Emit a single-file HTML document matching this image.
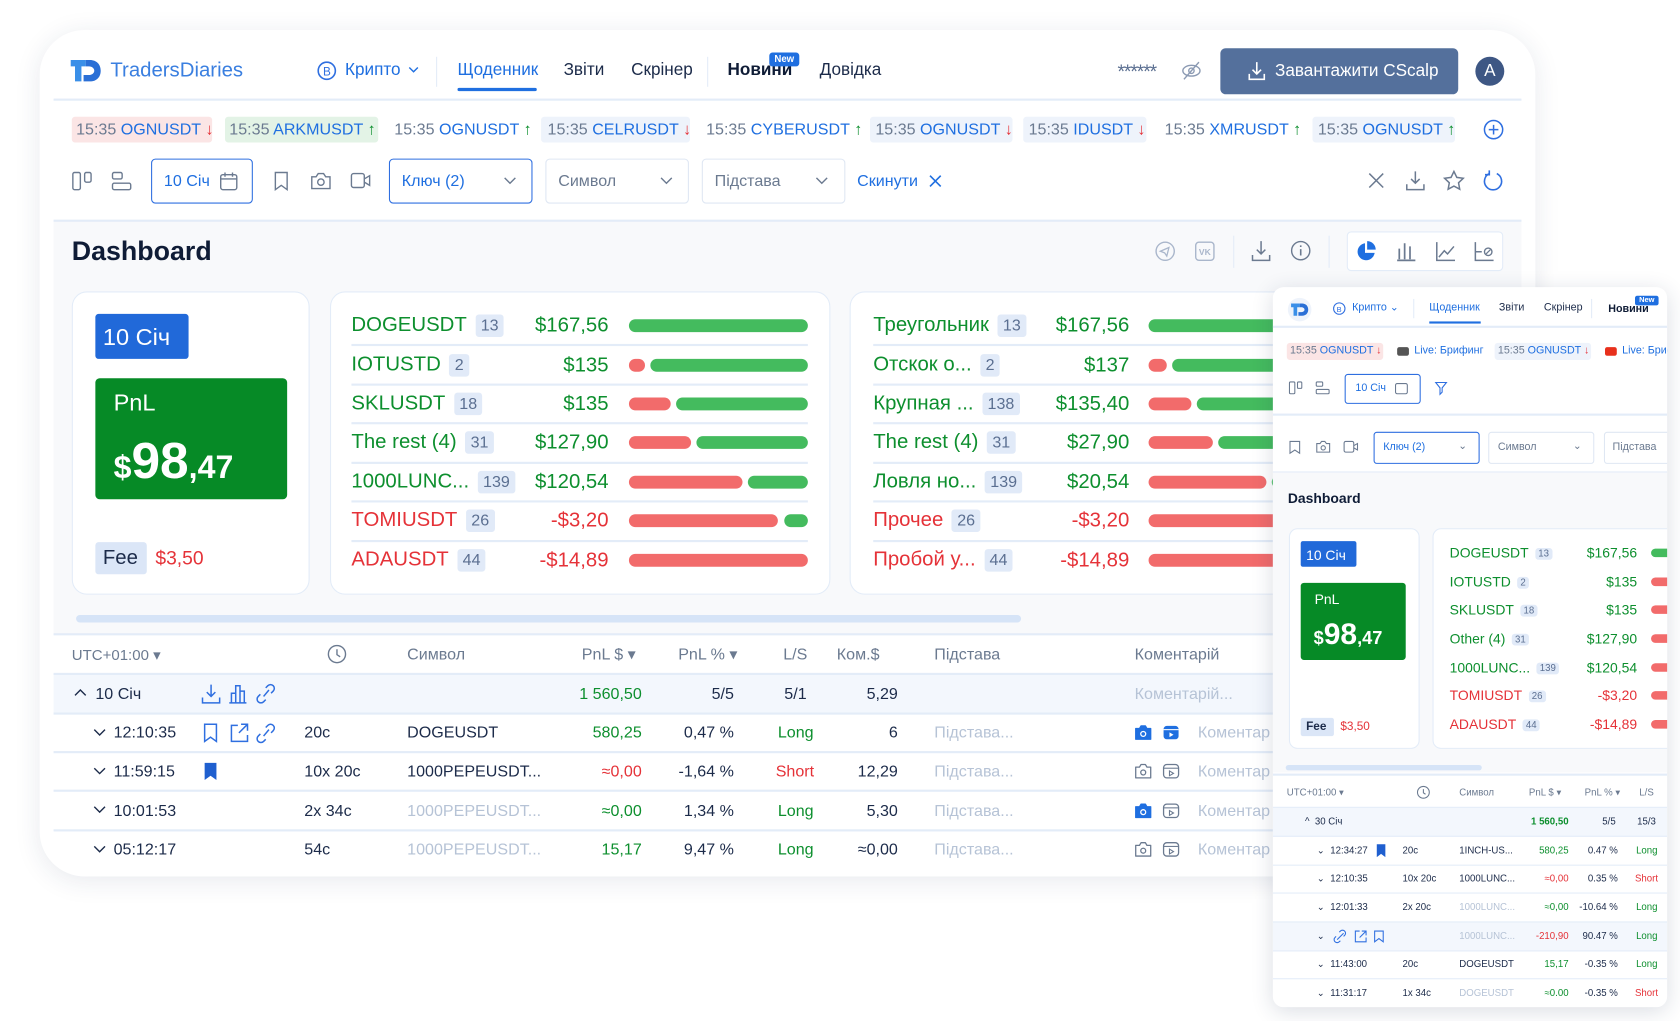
<!DOCTYPE html>
<html><head><meta charset="utf-8">
<style>
*{box-sizing:border-box;margin:0;padding:0}
html,body{width:1680px;height:1021px;overflow:hidden;background:#fff;font-family:"Liberation Sans","Noto Sans CJK SC",sans-serif}
#w{position:absolute;left:0;top:0;width:1568px;height:953px;transform:scale(1.071429);transform-origin:0 0}
.a{position:absolute}
.t{position:absolute;line-height:1;white-space:nowrap;transform:translateY(-50%)}
.r{text-align:right}
.card{position:absolute;background:#fff;border:1.5px solid #e3ecf8;border-radius:14px}
.bd{display:inline-block;background:#e1eaf8;color:#5b6f91;border-radius:3px;padding:3px 5px;font-size:15px;margin-left:8px;vertical-align:middle}
.bar{position:absolute;height:12px;border-radius:6px}
.g{background:#44bb5e}.rd{background:#f26b6b}
.gc{color:#0d8f2e}.rc{color:#e53238}
.ln{position:absolute;height:1.5px;background:#e3ecf8}
.pill{position:absolute;height:24px;border-radius:3px;transform:translateY(-50%)}
svg{position:absolute;overflow:visible}
</style></head><body><div id="w">

<!-- main card -->
<div class="a" style="left:37px;top:28px;width:1396px;height:790px;border-radius:42px;background:#fff;box-shadow:0 4px 24px rgba(30,50,90,.10);overflow:hidden">
</div>
<div class="a" style="left:50px;top:206px;width:1370px;height:386px;background:#f8f9fb"></div>
<div class="ln" style="left:50px;top:92px;width:1370px"></div>
<div class="ln" style="left:50px;top:205px;width:1370px"></div>

<!-- header -->
<svg style="left:66px;top:56px" width="28" height="20" viewBox="0 0 28 20"><path d="M0 0h14v6h-4v14h-6V6H0z" fill="#3a8fe8"/><path d="M14 0h4c6 0 10 4 10 10s-4 10-10 10h-6v-6h5c3 0 5-2 5-4s-2-4-5-4h-3z" fill="#2a6fd6"/></svg>
<div class="t" style="left:103px;top:66px;font-size:19px;color:#3a7fe0">TradersDiaries</div>
<svg style="left:296px;top:57px" width="18" height="18"><circle cx="9" cy="9" r="8" fill="none" stroke="#2f6fe0" stroke-width="1.5"/><text x="5.5" y="13.5" font-size="11" fill="#2f6fe0" font-family="Liberation Sans">B</text></svg>
<div class="t" style="left:322px;top:66px;font-size:16px;color:#1f6fe0">Крипто</div>
<svg style="left:381px;top:62px" width="10" height="7"><path d="M1 1l4 4 4-4" fill="none" stroke="#1f6fe0" stroke-width="1.3"/></svg>
<div class="a" style="left:407px;top:53px;width:1px;height:28px;background:#e3ecf8"></div>
<div class="t" style="left:427px;top:66px;font-size:16px;color:#1f6fe0">Щоденник</div>
<div class="a" style="left:427px;top:82px;width:74px;height:3px;background:#1f6fe0;border-radius:2px"></div>
<div class="t" style="left:526px;top:66px;font-size:16px;color:#1c2b4a">Звіти</div>
<div class="t" style="left:589px;top:66px;font-size:16px;color:#1c2b4a">Скрінер</div>
<div class="a" style="left:660px;top:53px;width:1px;height:28px;background:#e3ecf8"></div>
<div class="t" style="left:679px;top:66px;font-size:16px;color:#0f1c36;font-weight:bold">Новини</div>
<div class="a" style="left:718px;top:49px;width:28px;height:13px;background:#1f6fe0;border-radius:3px;color:#fff;font-size:9px;font-weight:bold;text-align:center;line-height:13px">New</div>
<div class="t" style="left:765px;top:66px;font-size:16px;color:#1c2b4a">Довідка</div>
<div class="t" style="left:1043px;top:67px;font-size:18px;color:#5b6f91;letter-spacing:-1px">******</div>
<svg style="left:1102px;top:57px" width="20" height="18"><ellipse cx="10" cy="9" rx="8" ry="5" fill="none" stroke="#8b9ab3" stroke-width="1.3"/><circle cx="10" cy="9" r="2.5" fill="none" stroke="#8b9ab3" stroke-width="1.3"/><path d="M3 17L17 1" stroke="#8b9ab3" stroke-width="1.3"/></svg>
<div class="a" style="left:1139px;top:45px;width:222px;height:43px;background:#54709c;border-radius:5px"></div>
<svg style="left:1164px;top:57px" width="18" height="18"><path d="M9 1v11M5 8l4 4 4-4M2 12v5h14v-5" fill="none" stroke="#fff" stroke-width="1.5"/></svg>
<div class="t" style="left:1190px;top:67px;font-size:16px;color:#fff">Завантажити CScalp</div>
<div class="a" style="left:1377px;top:53px;width:27px;height:27px;border-radius:50%;background:#3e5784;color:#fff;font-size:16px;text-align:center;line-height:27px">A</div>

<!-- ticker -->
<div class="pill" style="left:67px;top:121px;width:131px;background:#fbe5e5"></div>
<div class="pill" style="left:210px;top:121px;width:143px;background:#e3f3e6"></div>
<div class="pill" style="left:505px;top:121px;width:139px;background:#eef3fb"></div>
<div class="pill" style="left:812px;top:121px;width:133px;background:#eef3fb"></div>
<div class="pill" style="left:955px;top:121px;width:115px;background:#eef3fb"></div>
<div class="pill" style="left:1225px;top:121px;width:133px;background:#eef3fb"></div>
<div class="t" style="left:71px;top:121px;font-size:15px;color:#6b7a90">15:35 <span style="color:#1f6fe0">OGNUSDT</span> <span class="rc">↓</span></div>
<div class="t" style="left:214px;top:121px;font-size:15px;color:#6b7a90">15:35 <span style="color:#1f6fe0">ARKMUSDT</span> <span class="gc">↑</span></div>
<div class="t" style="left:368px;top:121px;font-size:15px;color:#6b7a90">15:35 <span style="color:#1f6fe0">OGNUSDT</span> <span class="gc">↑</span></div>
<div class="t" style="left:511px;top:121px;font-size:15px;color:#6b7a90">15:35 <span style="color:#1f6fe0">CELRUSDT</span> <span class="rc">↓</span></div>
<div class="t" style="left:659px;top:121px;font-size:15px;color:#6b7a90">15:35 <span style="color:#1f6fe0">CYBERUSDT</span> <span class="gc">↑</span></div>
<div class="t" style="left:817px;top:121px;font-size:15px;color:#6b7a90">15:35 <span style="color:#1f6fe0">OGNUSDT</span> <span class="rc">↓</span></div>
<div class="t" style="left:960px;top:121px;font-size:15px;color:#6b7a90">15:35 <span style="color:#1f6fe0">IDUSDT</span> <span class="rc">↓</span></div>
<div class="t" style="left:1087px;top:121px;font-size:15px;color:#6b7a90">15:35 <span style="color:#1f6fe0">XMRUSDT</span> <span class="gc">↑</span></div>
<div class="t" style="left:1230px;top:121px;font-size:15px;color:#6b7a90">15:35 <span style="color:#1f6fe0">OGNUSDT</span> <span class="gc">↑</span></div>
<svg style="left:1384px;top:111px" width="20" height="20"><circle cx="10" cy="10" r="8.5" fill="none" stroke="#2f6fe0" stroke-width="1.4"/><path d="M10 5.5v9M5.5 10h9" stroke="#2f6fe0" stroke-width="1.4"/></svg>

<!-- filter row -->
<svg style="left:67px;top:160px" width="20" height="18"><rect x="1" y="1" width="7" height="16" rx="1.5" fill="none" stroke="#6b7a90" stroke-width="1.3"/><rect x="12" y="1" width="6" height="9" rx="1.5" fill="none" stroke="#6b7a90" stroke-width="1.3"/></svg>
<svg style="left:104px;top:160px" width="20" height="18"><rect x="1" y="1" width="9" height="6" rx="1.5" fill="none" stroke="#6b7a90" stroke-width="1.3"/><rect x="1" y="11" width="17" height="6" rx="1.5" fill="none" stroke="#6b7a90" stroke-width="1.3"/></svg>
<div class="a" style="left:141px;top:148px;width:95px;height:42px;border:1.5px solid #2f6fe0;border-radius:4px"></div>
<div class="t" style="left:153px;top:169px;font-size:15px;color:#1f6fe0">10 Січ</div>
<svg style="left:205px;top:160px" width="17" height="18"><rect x="1" y="3" width="15" height="14" rx="2" fill="none" stroke="#6b7a90" stroke-width="1.3"/><path d="M1 7h15M5 1v4M12 1v4" stroke="#6b7a90" stroke-width="1.3"/></svg>
<svg style="left:255px;top:160px" width="15" height="18"><path d="M2 1h11v16l-5.5-4L2 17z" fill="none" stroke="#6b7a90" stroke-width="1.3"/></svg>
<svg style="left:290px;top:160px" width="19" height="17"><path d="M1 5h4l2-3h5l2 3h4v11H1z" fill="none" stroke="#6b7a90" stroke-width="1.3"/><circle cx="9.5" cy="10" r="3" fill="none" stroke="#6b7a90" stroke-width="1.3"/></svg>
<svg style="left:327px;top:160px" width="19" height="17"><rect x="1" y="2" width="12" height="13" rx="2" fill="none" stroke="#6b7a90" stroke-width="1.3"/><path d="M13 7l5-3v9l-5-3" fill="none" stroke="#6b7a90" stroke-width="1.3"/></svg>
<div class="a" style="left:363px;top:148px;width:134px;height:42px;border:1.5px solid #2f6fe0;border-radius:4px"></div>
<div class="t" style="left:375px;top:169px;font-size:15px;color:#1f6fe0">Ключ (2)</div>
<svg style="left:470px;top:165px" width="12" height="8"><path d="M1 1l5 5 5-5" fill="none" stroke="#6b7a90" stroke-width="1.3"/></svg>
<div class="a" style="left:509px;top:148px;width:134px;height:42px;border:1.5px solid #dfe7f3;border-radius:4px"></div>
<div class="t" style="left:521px;top:169px;font-size:15px;color:#6b7a90">Символ</div>
<svg style="left:616px;top:165px" width="12" height="8"><path d="M1 1l5 5 5-5" fill="none" stroke="#6b7a90" stroke-width="1.3"/></svg>
<div class="a" style="left:655px;top:148px;width:134px;height:42px;border:1.5px solid #dfe7f3;border-radius:4px"></div>
<div class="t" style="left:667px;top:169px;font-size:15px;color:#6b7a90">Підстава</div>
<svg style="left:761px;top:165px" width="12" height="8"><path d="M1 1l5 5 5-5" fill="none" stroke="#6b7a90" stroke-width="1.3"/></svg>
<div class="t" style="left:800px;top:169px;font-size:15px;color:#1f6fe0">Скинути</div>
<svg style="left:867px;top:163px" width="12" height="12"><path d="M1 1l10 10M11 1L1 11" stroke="#1f6fe0" stroke-width="1.5"/></svg>
<svg style="left:1277px;top:161px" width="15" height="15"><path d="M1 1l13 13M14 1L1 14" stroke="#6b7a90" stroke-width="1.4"/></svg>
<svg style="left:1312px;top:159px" width="18" height="19"><path d="M9 1v11M5 8l4 4 4-4M1 13v5h16v-5" fill="none" stroke="#6b7a90" stroke-width="1.4"/></svg>
<svg style="left:1347px;top:159px" width="20" height="19"><path d="M10 1l2.7 5.6 6 .8-4.4 4.2 1.1 6L10 14.7 4.6 17.6l1.1-6L1.3 7.4l6-.8z" fill="none" stroke="#6b7a90" stroke-width="1.4"/></svg>
<svg style="left:1384px;top:159px" width="19" height="20"><path d="M13 3a8 8 0 1 1-7 0" fill="none" stroke="#2f6fe0" stroke-width="1.5"/><path d="M6 0v4H2" fill="none" stroke="#2f6fe0" stroke-width="1.5"/></svg>

<!-- dashboard header -->
<div class="t" style="left:67px;top:235px;font-size:25px;color:#0f1c36;font-weight:bold">Dashboard</div>
<svg style="left:1078px;top:225px" width="19" height="19"><circle cx="9.5" cy="9.5" r="8.5" fill="none" stroke="#a9b6cb" stroke-width="1.3"/><path d="M5 9.5l8-3.5-2 8-2-3z" fill="none" stroke="#a9b6cb" stroke-width="1.2"/></svg>
<svg style="left:1115px;top:225px" width="19" height="19"><rect x="1" y="1" width="17" height="17" rx="3" fill="none" stroke="#a9b6cb" stroke-width="1.3"/><text x="4" y="13" font-size="8" fill="#a9b6cb" font-family="Liberation Sans" font-weight="bold">VK</text></svg>
<div class="a" style="left:1151px;top:220px;width:1px;height:30px;background:#e3ecf8"></div>
<svg style="left:1168px;top:224px" width="18" height="20"><path d="M9 1v12M5 9l4 4 4-4M1 14v5h16v-5" fill="none" stroke="#6b7a90" stroke-width="1.4"/></svg>
<svg style="left:1204px;top:224px" width="20" height="20"><circle cx="10" cy="10" r="8.5" fill="none" stroke="#6b7a90" stroke-width="1.3"/><path d="M10 8.5v6M10 5v1.5" stroke="#6b7a90" stroke-width="1.5"/></svg>
<div class="a" style="left:1240px;top:220px;width:1px;height:30px;background:#e3ecf8"></div>
<div class="a" style="left:1257px;top:216px;width:146px;height:37px;border:1.5px solid #e3ecf8;border-radius:4px;background:#fff"></div>
<svg style="left:1266px;top:225px" width="19" height="19"><path d="M8 2a8 8 0 1 0 9 9H8z" fill="#1f6fe0"/><path d="M10 0a8 8 0 0 1 8 8h-8z" fill="#1f6fe0"/></svg>
<svg style="left:1303px;top:225px" width="19" height="19"><path d="M3 7v10M8 2v15M13 5v12M1 18h17" stroke="#6b7a90" stroke-width="1.6"/></svg>
<svg style="left:1340px;top:225px" width="19" height="19"><path d="M1 1v17h17M3 15l5-6 3 3 6-7" fill="none" stroke="#6b7a90" stroke-width="1.4"/></svg>
<svg style="left:1376px;top:225px" width="19" height="19"><path d="M1 1v17h17M1 10h6" fill="none" stroke="#6b7a90" stroke-width="1.4"/><circle cx="13" cy="10" r="3.5" fill="none" stroke="#6b7a90" stroke-width="1.3"/><path d="M11 12l4-4" stroke="#6b7a90" stroke-width="1.2"/></svg>

<!-- card1 -->
<div class="card" style="left:67px;top:272px;width:222px;height:283px"></div>
<div class="a" style="left:89px;top:293px;width:87px;height:42px;background:#2169d9;border-radius:3px"></div>
<div class="t" style="left:96px;top:315px;font-size:22px;color:#fff">10 Січ</div>
<div class="a" style="left:89px;top:353px;width:179px;height:113px;background:#068a26;border-radius:4px"></div>
<div class="t" style="left:106px;top:376px;font-size:22px;color:#fff">PnL</div>
<div class="t" style="left:106px;top:431px;color:#fff;font-weight:bold"><span style="font-size:30px">$</span><span style="font-size:48px">98</span><span style="font-size:30px">,47</span></div>
<div class="a" style="left:89px;top:506px;width:48px;height:30px;background:#dbe6f7;border-radius:3px"></div>
<div class="t" style="left:96px;top:521px;font-size:19px;color:#1c2b4a">Fee</div>
<div class="t" style="left:145px;top:521px;font-size:18px;" ><span class="rc">$3,50</span></div>

<!-- card2 -->
<div class="card" style="left:308px;top:272px;width:467px;height:283px"></div>
<div class="ln" style="left:328px;top:321px;width:426px"></div>
<div class="ln" style="left:328px;top:358px;width:426px"></div>
<div class="ln" style="left:328px;top:394px;width:426px"></div>
<div class="ln" style="left:328px;top:431px;width:426px"></div>
<div class="ln" style="left:328px;top:467px;width:426px"></div>
<div class="ln" style="left:328px;top:504px;width:426px"></div>
<div class="t gc" style="left:328px;top:304px;font-size:19px">DOGEUSDT<span class="bd">13</span></div>
<div class="t gc" style="left:328px;top:341px;font-size:19px">IOTUSTD<span class="bd">2</span></div>
<div class="t gc" style="left:328px;top:377px;font-size:19px">SKLUSDT<span class="bd">18</span></div>
<div class="t gc" style="left:328px;top:413px;font-size:19px">The rest (4)<span class="bd">31</span></div>
<div class="t gc" style="left:328px;top:450px;font-size:19px">1000LUNC...<span class="bd">139</span></div>
<div class="t rc" style="left:328px;top:486px;font-size:19px">TOMIUSDT<span class="bd">26</span></div>
<div class="t rc" style="left:328px;top:523px;font-size:19px">ADAUSDT<span class="bd">44</span></div>
<div class="t gc r" style="left:448px;width:120px;top:304px;font-size:19px">$167,56</div>
<div class="t gc r" style="left:448px;width:120px;top:341px;font-size:19px">$135</div>
<div class="t gc r" style="left:448px;width:120px;top:377px;font-size:19px">$135</div>
<div class="t gc r" style="left:448px;width:120px;top:413px;font-size:19px">$127,90</div>
<div class="t gc r" style="left:448px;width:120px;top:450px;font-size:19px">$120,54</div>
<div class="t rc r" style="left:448px;width:120px;top:486px;font-size:19px">-$3,20</div>
<div class="t rc r" style="left:448px;width:120px;top:523px;font-size:19px">-$14,89</div>
<div class="bar g" style="left:587px;top:298px;width:167px"></div>
<div class="bar rd" style="left:587px;top:335px;width:15px"></div><div class="bar g" style="left:607px;top:335px;width:147px"></div>
<div class="bar rd" style="left:587px;top:371px;width:39px"></div><div class="bar g" style="left:631px;top:371px;width:123px"></div>
<div class="bar rd" style="left:587px;top:407px;width:58px"></div><div class="bar g" style="left:650px;top:407px;width:104px"></div>
<div class="bar rd" style="left:587px;top:444px;width:106px"></div><div class="bar g" style="left:698px;top:444px;width:56px"></div>
<div class="bar rd" style="left:587px;top:480px;width:139px"></div><div class="bar g" style="left:732px;top:480px;width:22px"></div>
<div class="bar rd" style="left:587px;top:517px;width:167px"></div>

<!-- card3 -->
<div class="card" style="left:793px;top:272px;width:467px;height:283px"></div>
<div class="ln" style="left:815px;top:321px;width:426px"></div>
<div class="ln" style="left:815px;top:358px;width:426px"></div>
<div class="ln" style="left:815px;top:394px;width:426px"></div>
<div class="ln" style="left:815px;top:431px;width:426px"></div>
<div class="ln" style="left:815px;top:467px;width:426px"></div>
<div class="ln" style="left:815px;top:504px;width:426px"></div>
<div class="t gc" style="left:815px;top:304px;font-size:19px">Треугольник<span class="bd">13</span></div>
<div class="t gc" style="left:815px;top:341px;font-size:19px">Отскок о...<span class="bd">2</span></div>
<div class="t gc" style="left:815px;top:377px;font-size:19px">Крупная ...<span class="bd">138</span></div>
<div class="t gc" style="left:815px;top:413px;font-size:19px">The rest (4)<span class="bd">31</span></div>
<div class="t gc" style="left:815px;top:450px;font-size:19px">Ловля но...<span class="bd">139</span></div>
<div class="t rc" style="left:815px;top:486px;font-size:19px">Прочее<span class="bd">26</span></div>
<div class="t rc" style="left:815px;top:523px;font-size:19px">Пробой у...<span class="bd">44</span></div>
<div class="t gc r" style="left:934px;width:120px;top:304px;font-size:19px">$167,56</div>
<div class="t gc r" style="left:934px;width:120px;top:341px;font-size:19px">$137</div>
<div class="t gc r" style="left:934px;width:120px;top:377px;font-size:19px">$135,40</div>
<div class="t gc r" style="left:934px;width:120px;top:413px;font-size:19px">$27,90</div>
<div class="t gc r" style="left:934px;width:120px;top:450px;font-size:19px">$20,54</div>
<div class="t rc r" style="left:934px;width:120px;top:486px;font-size:19px">-$3,20</div>
<div class="t rc r" style="left:934px;width:120px;top:523px;font-size:19px">-$14,89</div>
<div class="bar g" style="left:1072px;top:298px;width:170px"></div>
<div class="bar rd" style="left:1072px;top:335px;width:17px"></div><div class="bar g" style="left:1094px;top:335px;width:148px"></div>
<div class="bar rd" style="left:1072px;top:371px;width:40px"></div><div class="bar g" style="left:1117px;top:371px;width:125px"></div>
<div class="bar rd" style="left:1072px;top:407px;width:60px"></div><div class="bar g" style="left:1137px;top:407px;width:105px"></div>
<div class="bar rd" style="left:1072px;top:444px;width:110px"></div><div class="bar g" style="left:1187px;top:444px;width:55px"></div>
<div class="bar rd" style="left:1072px;top:480px;width:170px"></div>
<div class="bar rd" style="left:1072px;top:517px;width:170px"></div>

<!-- scrollbar -->
<div class="a" style="left:71px;top:574px;width:882px;height:7px;background:#d6e4f7;border-radius:4px"></div>

<!-- table -->
<div class="a" style="left:50px;top:592px;width:1370px;height:226px;background:#fff;border-radius:0 0 30px 30px"></div>
<div class="ln" style="left:50px;top:591px;width:1370px"></div>
<div class="a" style="left:50px;top:629px;width:1370px;height:36px;background:#f3f7fd"></div>
<div class="ln" style="left:50px;top:628px;width:1370px"></div>
<div class="ln" style="left:50px;top:665px;width:1370px"></div>
<div class="ln" style="left:50px;top:701px;width:1370px"></div>
<div class="ln" style="left:50px;top:737px;width:1370px"></div>
<div class="ln" style="left:50px;top:774px;width:1370px"></div>

<div class="t" style="left:67px;top:611px;font-size:14px;color:#6b7a90">UTC+01:00 ▾</div>
<svg style="left:305px;top:601px" width="19" height="19"><circle cx="9.5" cy="9.5" r="8" fill="none" stroke="#6b7a90" stroke-width="1.3"/><path d="M9.5 5v5l3 2" fill="none" stroke="#6b7a90" stroke-width="1.3"/></svg>
<div class="t" style="left:380px;top:611px;font-size:15px;color:#6b7a90">Символ</div>
<div class="t" style="left:543px;top:611px;font-size:15px;color:#6b7a90">PnL $ ▾</div>
<div class="t" style="left:633px;top:611px;font-size:15px;color:#6b7a90">PnL % ▾</div>
<div class="t" style="left:731px;top:611px;font-size:15px;color:#6b7a90">L/S</div>
<div class="t" style="left:781px;top:611px;font-size:15px;color:#6b7a90">Ком.$</div>
<div class="t" style="left:872px;top:611px;font-size:15px;color:#6b7a90">Підстава</div>
<div class="t" style="left:1059px;top:611px;font-size:15px;color:#6b7a90">Коментарій</div>

<!-- group row -->
<svg style="left:69px;top:642px" width="12" height="8"><path d="M1 7l5-5 5 5" fill="none" stroke="#1c2b4a" stroke-width="1.3"/></svg>
<div class="t" style="left:89px;top:648px;font-size:15px;color:#1c2b4a">10 Січ</div>
<svg style="left:188px;top:638px" width="18" height="19"><path d="M9 1v11M5 8l4 4 4-4M1 13v5h16v-5" fill="none" stroke="#2f6fe0" stroke-width="1.4"/></svg>
<svg style="left:213px;top:638px" width="18" height="19"><path d="M1 18h16M3 18V9h4v9M7 18V2h4v16M11 18V7h4v11" fill="none" stroke="#2f6fe0" stroke-width="1.4"/></svg>
<svg style="left:239px;top:638px" width="18" height="19"><path d="M7 12l5-6M9 4l2-2a3.5 3.5 0 0 1 5 5l-2 2M9 15l-2 2a3.5 3.5 0 0 1-5-5l2-2" fill="none" stroke="#2f6fe0" stroke-width="1.4"/></svg>
<div class="t gc r" style="left:480px;width:119px;top:648px;font-size:15px">1 560,50</div>
<div class="t r" style="left:600px;width:85px;top:648px;font-size:15px;color:#1c2b4a">5/5</div>
<div class="t" style="left:732px;top:648px;font-size:15px;color:#1c2b4a">5/1</div>
<div class="t r" style="left:760px;width:78px;top:648px;font-size:15px;color:#1c2b4a">5,29</div>
<div class="t" style="left:1059px;top:648px;font-size:15px;color:#b6c3d6">Коментарій...</div>

<!-- rows -->
<svg style="left:87px;top:680px" width="12" height="8"><path d="M1 1l5 5 5-5" fill="none" stroke="#1c2b4a" stroke-width="1.3"/></svg>
<svg style="left:87px;top:716px" width="12" height="8"><path d="M1 1l5 5 5-5" fill="none" stroke="#1c2b4a" stroke-width="1.3"/></svg>
<svg style="left:87px;top:752px" width="12" height="8"><path d="M1 1l5 5 5-5" fill="none" stroke="#1c2b4a" stroke-width="1.3"/></svg>
<svg style="left:87px;top:789px" width="12" height="8"><path d="M1 1l5 5 5-5" fill="none" stroke="#1c2b4a" stroke-width="1.3"/></svg>
<div class="t" style="left:106px;top:684px;font-size:15px;color:#1c2b4a">12:10:35</div>
<div class="t" style="left:106px;top:720px;font-size:15px;color:#1c2b4a">11:59:15</div>
<div class="t" style="left:106px;top:757px;font-size:15px;color:#1c2b4a">10:01:53</div>
<div class="t" style="left:106px;top:793px;font-size:15px;color:#1c2b4a">05:12:17</div>
<svg style="left:189px;top:675px" width="15" height="18"><path d="M2 1h11v16l-5.5-4L2 17z" fill="none" stroke="#2f6fe0" stroke-width="1.4"/></svg>
<svg style="left:214px;top:675px" width="18" height="18"><path d="M8 2H2v15h15v-6M11 1h6v6M17 1l-8 8" fill="none" stroke="#2f6fe0" stroke-width="1.4"/></svg>
<svg style="left:239px;top:675px" width="18" height="18"><path d="M7 12l5-6M9 4l2-2a3.5 3.5 0 0 1 5 5l-2 2M9 15l-2 2a3.5 3.5 0 0 1-5-5l2-2" fill="none" stroke="#2f6fe0" stroke-width="1.4"/></svg>
<svg style="left:189px;top:711px" width="15" height="18"><path d="M2 1h11v16l-5.5-4L2 17z" fill="#1f5fcf"/></svg>
<div class="t" style="left:284px;top:684px;font-size:15px;color:#1c2b4a">20с</div>
<div class="t" style="left:284px;top:720px;font-size:15px;color:#1c2b4a">10x 20с</div>
<div class="t" style="left:284px;top:757px;font-size:15px;color:#1c2b4a">2x 34с</div>
<div class="t" style="left:284px;top:793px;font-size:15px;color:#1c2b4a">54с</div>
<div class="t" style="left:380px;top:684px;font-size:15px;color:#1c2b4a">DOGEUSDT</div>
<div class="t" style="left:380px;top:720px;font-size:15px;color:#1c2b4a">1000PEPEUSDT...</div>
<div class="t" style="left:380px;top:757px;font-size:15px;color:#b6c3d6">1000PEPEUSDT...</div>
<div class="t" style="left:380px;top:793px;font-size:15px;color:#b6c3d6">1000PEPEUSDT...</div>
<div class="t gc r" style="left:500px;width:99px;top:684px;font-size:15px">580,25</div>
<div class="t rc r" style="left:500px;width:99px;top:720px;font-size:15px">≈0,00</div>
<div class="t gc r" style="left:500px;width:99px;top:757px;font-size:15px">≈0,00</div>
<div class="t gc r" style="left:500px;width:99px;top:793px;font-size:15px">15,17</div>
<div class="t r" style="left:600px;width:85px;top:684px;font-size:15px;color:#1c2b4a">0,47 %</div>
<div class="t r" style="left:600px;width:85px;top:720px;font-size:15px;color:#1c2b4a">-1,64 %</div>
<div class="t r" style="left:600px;width:85px;top:757px;font-size:15px;color:#1c2b4a">1,34 %</div>
<div class="t r" style="left:600px;width:85px;top:793px;font-size:15px;color:#1c2b4a">9,47 %</div>
<div class="t gc" style="left:726px;top:684px;font-size:15px">Long</div>
<div class="t rc" style="left:724px;top:720px;font-size:15px">Short</div>
<div class="t gc" style="left:726px;top:757px;font-size:15px">Long</div>
<div class="t gc" style="left:726px;top:793px;font-size:15px">Long</div>
<div class="t r" style="left:760px;width:78px;top:684px;font-size:15px;color:#1c2b4a">6</div>
<div class="t r" style="left:760px;width:78px;top:720px;font-size:15px;color:#1c2b4a">12,29</div>
<div class="t r" style="left:760px;width:78px;top:757px;font-size:15px;color:#1c2b4a">5,30</div>
<div class="t r" style="left:760px;width:78px;top:793px;font-size:15px;color:#1c2b4a">≈0,00</div>
<div class="t" style="left:872px;top:684px;font-size:15px;color:#b6c3d6">Підстава...</div>
<div class="t" style="left:872px;top:720px;font-size:15px;color:#b6c3d6">Підстава...</div>
<div class="t" style="left:872px;top:757px;font-size:15px;color:#b6c3d6">Підстава...</div>
<div class="t" style="left:872px;top:793px;font-size:15px;color:#b6c3d6">Підстава...</div>
<!-- camera/video icons -->
<svg style="left:1059px;top:676px" width="16" height="15"><path d="M1 4h3.5l1.5-2.5h4L11.5 4H15v10H1z" fill="#1f6fe0" stroke="#1f6fe0" stroke-width="1.2" stroke-linejoin="round"/><circle cx="8" cy="9" r="2.3" fill="none" stroke="#fff" stroke-width="1.2"/></svg>
<svg style="left:1085px;top:676px" width="16" height="15"><rect x="1" y="1.5" width="14" height="12.5" rx="3" fill="#1f6fe0"/><path d="M1 5h14" stroke="#fff" stroke-width="1"/><path d="M6.5 7.5v4.5l3.8-2.2z" fill="#fff"/></svg>
<svg style="left:1059px;top:712px" width="16" height="15"><path d="M1 4h3.5l1.5-2.5h4L11.5 4H15v10H1z" fill="none" stroke="#6b7a90" stroke-width="1.2" stroke-linejoin="round"/><circle cx="8" cy="9" r="2.3" fill="none" stroke="#6b7a90" stroke-width="1.2"/></svg>
<svg style="left:1085px;top:712px" width="16" height="15"><rect x="1" y="1.5" width="14" height="12.5" rx="3" fill="none" stroke="#6b7a90" stroke-width="1.2"/><path d="M1 5h14" stroke="#6b7a90" stroke-width="1"/><path d="M6.5 7.5v4.5l3.8-2.2z" fill="none" stroke="#6b7a90"/></svg>
<svg style="left:1059px;top:749px" width="16" height="15"><path d="M1 4h3.5l1.5-2.5h4L11.5 4H15v10H1z" fill="#1f6fe0" stroke="#1f6fe0" stroke-width="1.2" stroke-linejoin="round"/><circle cx="8" cy="9" r="2.3" fill="none" stroke="#fff" stroke-width="1.2"/></svg>
<svg style="left:1085px;top:749px" width="16" height="15"><rect x="1" y="1.5" width="14" height="12.5" rx="3" fill="none" stroke="#6b7a90" stroke-width="1.2"/><path d="M1 5h14" stroke="#6b7a90" stroke-width="1"/><path d="M6.5 7.5v4.5l3.8-2.2z" fill="none" stroke="#6b7a90"/></svg>
<svg style="left:1059px;top:785px" width="16" height="15"><path d="M1 4h3.5l1.5-2.5h4L11.5 4H15v10H1z" fill="none" stroke="#6b7a90" stroke-width="1.2" stroke-linejoin="round"/><circle cx="8" cy="9" r="2.3" fill="none" stroke="#6b7a90" stroke-width="1.2"/></svg>
<svg style="left:1085px;top:785px" width="16" height="15"><rect x="1" y="1.5" width="14" height="12.5" rx="3" fill="none" stroke="#6b7a90" stroke-width="1.2"/><path d="M1 5h14" stroke="#6b7a90" stroke-width="1"/><path d="M6.5 7.5v4.5l3.8-2.2z" fill="none" stroke="#6b7a90"/></svg>
<div class="t" style="left:1118px;top:684px;font-size:15px;color:#b6c3d6">Коментар</div>
<div class="t" style="left:1118px;top:720px;font-size:15px;color:#b6c3d6">Коментар</div>
<div class="t" style="left:1118px;top:757px;font-size:15px;color:#b6c3d6">Коментар</div>
<div class="t" style="left:1118px;top:793px;font-size:15px;color:#b6c3d6">Коментар</div>

<!-- overlay small window -->
<div class="a" style="left:1188px;top:268px;width:368px;height:672px;background:#fff;border-radius:10px;box-shadow:0 4px 20px rgba(30,50,90,.16);overflow:hidden;font-size:10px">
 <div class="a" style="left:14px;top:10px;width:22px;height:22px;border-radius:50%;background:#eef3fb"></div>
 <svg style="left:17px;top:15px" width="16" height="12" viewBox="0 0 28 20"><path d="M0 0h14v6h-4v14h-6V6H0z" fill="#3a8fe8"/><path d="M14 0h4c6 0 10 4 10 10s-4 10-10 10h-6v-6h5c3 0 5-2 5-4s-2-4-5-4h-3z" fill="#2a6fd6"/></svg>
 <svg style="left:56px;top:14px" width="12" height="12"><circle cx="6" cy="6" r="5.3" fill="none" stroke="#2f6fe0"/><text x="3.5" y="9" font-size="7" fill="#2f6fe0" font-family="Liberation Sans">B</text></svg>
 <div class="t" style="left:74px;top:20px;color:#1f6fe0">Крипто ⌄</div>
 <div class="a" style="left:131px;top:11px;width:1px;height:18px;background:#e3ecf8"></div>
 <div class="t" style="left:146px;top:20px;color:#1f6fe0">Щоденник</div>
 <div class="a" style="left:146px;top:32px;width:48px;height:2px;background:#1f6fe0"></div>
 <div class="t" style="left:211px;top:20px;color:#1c2b4a">Звіти</div>
 <div class="t" style="left:253px;top:20px;color:#1c2b4a">Скрінер</div>
 <div class="a" style="left:297px;top:11px;width:1px;height:18px;background:#e3ecf8"></div>
 <div class="t" style="left:313px;top:21px;color:#0f1c36;font-weight:bold">Новини</div>
 <div class="a" style="left:338px;top:8px;width:22px;height:9px;background:#1f6fe0;border-radius:2px;color:#fff;font-size:7px;font-weight:bold;text-align:center;line-height:9px">New</div>
 <div class="ln" style="left:0;top:36px;width:368px"></div>
 <div class="pill" style="left:13px;top:60px;width:90px;height:16px;background:#fbe5e5"></div>
 <div class="t" style="left:16px;top:60px;color:#6b7a90">15:35 <span style="color:#1f6fe0">OGNUSDT</span> <span class="rc">↓</span></div>
 <div class="a" style="left:116px;top:56px;width:11px;height:8px;background:#555;border-radius:2px"></div>
 <div class="t" style="left:132px;top:60px;color:#1f6fe0">Live: Брифинг</div>
 <div class="pill" style="left:207px;top:60px;width:90px;height:16px;background:#eef3fb"></div>
 <div class="t" style="left:210px;top:60px;color:#6b7a90">15:35 <span style="color:#1f6fe0">OGNUSDT</span> <span class="rc">↓</span></div>
 <div class="a" style="left:310px;top:56px;width:11px;height:8px;background:#e8301c;border-radius:2px"></div>
 <div class="t" style="left:326px;top:60px;color:#1f6fe0">Live: Брифинг</div>
 <svg style="left:15px;top:88px" width="13" height="13"><rect x=".5" y=".5" width="5" height="11" rx="1" fill="none" stroke="#6b7a90"/><rect x="8" y=".5" width="4" height="6" rx="1" fill="none" stroke="#6b7a90"/></svg>
 <svg style="left:40px;top:88px" width="14" height="13"><rect x=".5" y=".5" width="6" height="4" rx="1" fill="none" stroke="#6b7a90"/><rect x=".5" y="7.5" width="12" height="4" rx="1" fill="none" stroke="#6b7a90"/></svg>
 <div class="a" style="left:67px;top:81px;width:71px;height:28px;border:1px solid #2f6fe0;border-radius:3px"></div>
 <div class="t" style="left:77px;top:95px;color:#1f6fe0">10 Січ</div>
 <svg style="left:114px;top:89px" width="12" height="11"><rect x=".5" y="1" width="11" height="9.5" rx="1.5" fill="none" stroke="#6b7a90"/></svg>
 <svg style="left:151px;top:88px" width="12" height="13"><path d="M1 1h10l-4 5v4l-2 2V6z" fill="none" stroke="#2f6fe0"/></svg>
 <div class="ln" style="left:0;top:118px;width:368px"></div>
 <svg style="left:15px;top:143px" width="11" height="13"><path d="M1 1h9v11l-4.5-3L1 12z" fill="none" stroke="#6b7a90"/></svg>
 <svg style="left:40px;top:143px" width="14" height="12"><path d="M1 3h3l1.5-2h3L10 3h3v8H1z" fill="none" stroke="#6b7a90"/><circle cx="7" cy="7" r="2" fill="none" stroke="#6b7a90"/></svg>
 <svg style="left:66px;top:143px" width="14" height="12"><rect x=".5" y="1" width="9" height="10" rx="1.5" fill="none" stroke="#6b7a90"/><path d="M9.5 5l3.5-2v6l-3.5-2" fill="none" stroke="#6b7a90"/></svg>
 <div class="a" style="left:94px;top:135px;width:99px;height:30px;border:1px solid #2f6fe0;border-radius:3px"></div>
 <div class="t" style="left:103px;top:150px;color:#1f6fe0">Ключ (2)</div>
 <div class="t" style="left:173px;top:149px;color:#6b7a90">⌄</div>
 <div class="a" style="left:201px;top:135px;width:99px;height:30px;border:1px solid #dfe7f3;border-radius:3px"></div>
 <div class="t" style="left:210px;top:150px;color:#6b7a90">Символ</div>
 <div class="t" style="left:280px;top:149px;color:#6b7a90">⌄</div>
 <div class="a" style="left:309px;top:135px;width:80px;height:30px;border:1px solid #dfe7f3;border-radius:3px"></div>
 <div class="t" style="left:317px;top:150px;color:#6b7a90">Підстава</div>
 <div class="ln" style="left:0;top:172px;width:368px"></div>
 <div class="a" style="left:0;top:173px;width:368px;height:280px;background:#f8f9fb"></div>
 <div class="t" style="left:14px;top:197px;font-size:13px;color:#0f1c36;font-weight:bold">Dashboard</div>
 <div class="card" style="left:15px;top:225px;width:122px;height:206px;border-radius:8px"></div>
 <div class="a" style="left:26px;top:237px;width:52px;height:24px;background:#2169d9;border-radius:2px"></div>
 <div class="t" style="left:31px;top:250px;font-size:13px;color:#fff">10 Січ</div>
 <div class="a" style="left:26px;top:276px;width:98px;height:72px;background:#068a26;border-radius:3px"></div>
 <div class="t" style="left:39px;top:291px;font-size:13px;color:#fff">PnL</div>
 <div class="t" style="left:38px;top:324px;color:#fff;font-weight:bold"><span style="font-size:17px">$</span><span style="font-size:28px">98</span><span style="font-size:17px">,47</span></div>
 <div class="a" style="left:26px;top:402px;width:31px;height:17px;background:#dbe6f7;border-radius:2px"></div>
 <div class="t" style="left:31px;top:411px;font-size:11px;color:#1c2b4a;font-weight:bold">Fee</div>
 <div class="t rc" style="left:63px;top:411px;font-size:11px">$3,50</div>
 <div class="card" style="left:149px;top:225px;width:230px;height:206px;border-radius:8px"></div>
 <div class="t gc" style="left:165px;top:248px;font-size:13px">DOGEUSDT<span class="bd" style="font-size:9px;padding:1px 3px;margin-left:6px">13</span></div>
 <div class="t gc" style="left:165px;top:275px;font-size:13px">IOTUSTD<span class="bd" style="font-size:9px;padding:1px 3px;margin-left:6px">2</span></div>
 <div class="t gc" style="left:165px;top:301px;font-size:13px">SKLUSDT<span class="bd" style="font-size:9px;padding:1px 3px;margin-left:6px">18</span></div>
 <div class="t gc" style="left:165px;top:328px;font-size:13px">Other (4)<span class="bd" style="font-size:9px;padding:1px 3px;margin-left:6px">31</span></div>
 <div class="t gc" style="left:165px;top:355px;font-size:13px">1000LUNC...<span class="bd" style="font-size:9px;padding:1px 3px;margin-left:6px">139</span></div>
 <div class="t rc" style="left:165px;top:381px;font-size:13px">TOMIUSDT<span class="bd" style="font-size:9px;padding:1px 3px;margin-left:6px">26</span></div>
 <div class="t rc" style="left:165px;top:408px;font-size:13px">ADAUSDT<span class="bd" style="font-size:9px;padding:1px 3px;margin-left:6px">44</span></div>
 <div class="t gc r" style="left:260px;width:80px;top:248px;font-size:13px">$167,56</div>
 <div class="t gc r" style="left:260px;width:80px;top:275px;font-size:13px">$135</div>
 <div class="t gc r" style="left:260px;width:80px;top:301px;font-size:13px">$135</div>
 <div class="t gc r" style="left:260px;width:80px;top:328px;font-size:13px">$127,90</div>
 <div class="t gc r" style="left:260px;width:80px;top:355px;font-size:13px">$120,54</div>
 <div class="t rc r" style="left:260px;width:80px;top:381px;font-size:13px">-$3,20</div>
 <div class="t rc r" style="left:260px;width:80px;top:408px;font-size:13px">-$14,89</div>
 <div class="bar g" style="left:353px;top:244px;width:20px;height:8px"></div>
 <div class="bar rd" style="left:353px;top:271px;width:20px;height:8px"></div>
 <div class="bar rd" style="left:353px;top:297px;width:20px;height:8px"></div>
 <div class="bar rd" style="left:353px;top:324px;width:20px;height:8px"></div>
 <div class="bar rd" style="left:353px;top:351px;width:20px;height:8px"></div>
 <div class="bar rd" style="left:353px;top:377px;width:20px;height:8px"></div>
 <div class="bar rd" style="left:353px;top:404px;width:20px;height:8px"></div>
 <div class="a" style="left:12px;top:446px;width:183px;height:5px;background:#d6e4f7;border-radius:3px"></div>
 <div class="a" style="left:0;top:455px;width:368px;height:217px;background:#fff"></div>
 <div class="ln" style="left:0;top:454px;width:368px"></div>
 <div class="t" style="left:13px;top:472px;font-size:9px;color:#6b7a90">UTC+01:00 ▾</div>
 <svg style="left:134px;top:465px" width="13" height="13"><circle cx="6.5" cy="6.5" r="5.5" fill="none" stroke="#6b7a90"/><path d="M6.5 3.5v3.5l2 1.3" fill="none" stroke="#6b7a90"/></svg>
 <div class="t" style="left:174px;top:472px;font-size:9px;color:#6b7a90">Символ</div>
 <div class="t" style="left:239px;top:472px;font-size:9px;color:#6b7a90">PnL $ ▾</div>
 <div class="t" style="left:291px;top:472px;font-size:9px;color:#6b7a90">PnL % ▾</div>
 <div class="t" style="left:342px;top:472px;font-size:9px;color:#6b7a90">L/S</div>
 <div class="a" style="left:0;top:486px;width:368px;height:27px;background:#f3f7fd"></div>
 <div class="a" style="left:0;top:592px;width:368px;height:27px;background:#f3f7fd"></div>
 <div class="ln" style="left:0;top:485px;width:368px;height:1px"></div>
 <div class="ln" style="left:0;top:512px;width:368px;height:1px"></div>
 <div class="ln" style="left:0;top:539px;width:368px;height:1px"></div>
 <div class="ln" style="left:0;top:565px;width:368px;height:1px"></div>
 <div class="ln" style="left:0;top:592px;width:368px;height:1px"></div>
 <div class="ln" style="left:0;top:619px;width:368px;height:1px"></div>
 <div class="ln" style="left:0;top:645px;width:368px;height:1px"></div>
 <div class="t" style="left:30px;top:499px;font-size:9px;color:#1c2b4a">^ &nbsp;30 Січ</div>
 <div class="t gc r" style="left:220px;width:56px;top:499px;font-size:9px;font-weight:bold">1 560,50</div>
 <div class="t r" style="left:280px;width:40px;top:499px;font-size:9px;color:#1c2b4a">5/5</div>
 <div class="t" style="left:340px;top:499px;font-size:9px;color:#1c2b4a">15/3</div>

 <div class="t" style="left:41px;top:526px;font-size:9px;color:#1c2b4a">⌄ &nbsp;12:34:27</div>
 <div class="t" style="left:41px;top:552px;font-size:9px;color:#1c2b4a">⌄ &nbsp;12:10:35</div>
 <div class="t" style="left:41px;top:579px;font-size:9px;color:#1c2b4a">⌄ &nbsp;12:01:33</div>
 <div class="t" style="left:41px;top:606px;font-size:9px;color:#1c2b4a">⌄</div>
 <div class="t" style="left:41px;top:632px;font-size:9px;color:#1c2b4a">⌄ &nbsp;11:43:00</div>
 <div class="t" style="left:41px;top:659px;font-size:9px;color:#1c2b4a">⌄ &nbsp;11:31:17</div>
 <svg style="left:96px;top:520px" width="10" height="12"><path d="M1 0h8v12l-4-3-4 3z" fill="#1f5fcf"/></svg>
 <svg style="left:57px;top:600px" width="48" height="12"><path d="M3 9l6-6M5 2l1-1a2.5 2.5 0 0 1 4 4l-1 1M6 10l-1 1a2.5 2.5 0 0 1-4-4l1-1" fill="none" stroke="#2f6fe0"/><path d="M24 1h-4v10h10V7M26 1h4v4M30 1l-6 6" fill="none" stroke="#2f6fe0"/><path d="M38 1h8v10l-4-3-4 3z" fill="none" stroke="#2f6fe0"/></svg>
 <div class="t" style="left:121px;top:526px;font-size:9px;color:#1c2b4a">20с</div>
 <div class="t" style="left:121px;top:552px;font-size:9px;color:#1c2b4a">10x 20с</div>
 <div class="t" style="left:121px;top:579px;font-size:9px;color:#1c2b4a">2x 20с</div>
 <div class="t" style="left:121px;top:632px;font-size:9px;color:#1c2b4a">20с</div>
 <div class="t" style="left:121px;top:659px;font-size:9px;color:#1c2b4a">1x 34с</div>
 <div class="t" style="left:174px;top:526px;font-size:9px;color:#1c2b4a">1INCH-US...</div>
 <div class="t" style="left:174px;top:552px;font-size:9px;color:#1c2b4a">1000LUNC...</div>
 <div class="t" style="left:174px;top:579px;font-size:9px;color:#b6c3d6">1000LUNC...</div>
 <div class="t" style="left:174px;top:606px;font-size:9px;color:#b6c3d6">1000LUNC...</div>
 <div class="t" style="left:174px;top:632px;font-size:9px;color:#1c2b4a">DOGEUSDT</div>
 <div class="t" style="left:174px;top:659px;font-size:9px;color:#b6c3d6">DOGEUSDT</div>
 <div class="t gc r" style="left:220px;width:56px;top:526px;font-size:9px">580,25</div>
 <div class="t rc r" style="left:220px;width:56px;top:552px;font-size:9px">≈0,00</div>
 <div class="t gc r" style="left:220px;width:56px;top:579px;font-size:9px">≈0,00</div>
 <div class="t rc r" style="left:220px;width:56px;top:606px;font-size:9px">-210,90</div>
 <div class="t gc r" style="left:220px;width:56px;top:632px;font-size:9px">15,17</div>
 <div class="t gc r" style="left:220px;width:56px;top:659px;font-size:9px">≈0.00</div>
 <div class="t r" style="left:270px;width:52px;top:526px;font-size:9px;color:#1c2b4a">0.47 %</div>
 <div class="t r" style="left:270px;width:52px;top:552px;font-size:9px;color:#1c2b4a">0.35 %</div>
 <div class="t r" style="left:270px;width:52px;top:579px;font-size:9px;color:#1c2b4a">-10.64 %</div>
 <div class="t r" style="left:270px;width:52px;top:606px;font-size:9px;color:#1c2b4a">90.47 %</div>
 <div class="t r" style="left:270px;width:52px;top:632px;font-size:9px;color:#1c2b4a">-0.35 %</div>
 <div class="t r" style="left:270px;width:52px;top:659px;font-size:9px;color:#1c2b4a">-0.35 %</div>
 <div class="t gc" style="left:339px;top:526px;font-size:9px">Long</div>
 <div class="t rc" style="left:338px;top:552px;font-size:9px">Short</div>
 <div class="t gc" style="left:339px;top:579px;font-size:9px">Long</div>
 <div class="t gc" style="left:339px;top:606px;font-size:9px">Long</div>
 <div class="t gc" style="left:339px;top:632px;font-size:9px">Long</div>
 <div class="t rc" style="left:338px;top:659px;font-size:9px">Short</div>
</div>

</div></body></html>
